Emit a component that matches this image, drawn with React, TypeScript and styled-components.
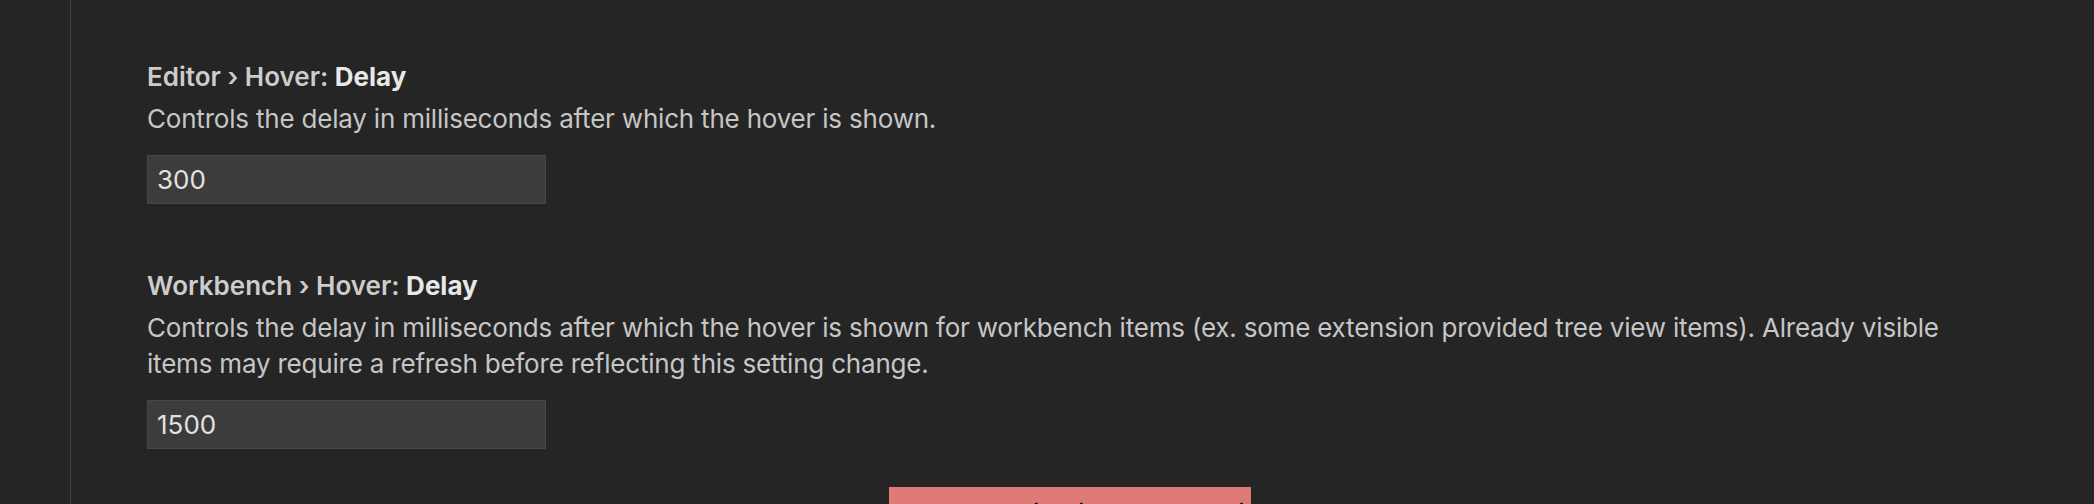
import React from 'react';
import styled, { createGlobalStyle } from 'styled-components';

const GlobalStyle = createGlobalStyle`
  html, body {
    margin: 0;
    padding: 0;
    background: #252525;
  }

  body {
    font-family: Inter, "Noto Sans", "Liberation Sans", sans-serif;
    -webkit-font-smoothing: antialiased;
  }
`;

const Page = styled.div`
  display: flex;
  height: 504px;
  overflow: hidden;
  background: #252525;
`;

const Toc = styled.div`
  width: 70px;
  flex: none;
  border-right: 1px solid #414141;
`;

const Content = styled.div`
  flex: 1;
  padding: 29px 0 0 76px;
  display: flex;
  flex-direction: column;
`;

const SettingItem = styled.div`
  display: flex;
  flex-direction: column;
  padding: 30px 0 34px;
`;

const Title = styled.div`
  font-size: 26px;
  line-height: 36px;
  font-weight: 600;
  color: #cccccc;
  white-space: nowrap;
`;

const Label = styled.span`
  color: #e8e8e8;
  font-weight: 700;
`;

const Description = styled.div`
  margin-top: 6px;
  max-width: 1810px;
  font-size: 26px;
  line-height: 36px;
  letter-spacing: -0.2px;
  color: #c6c6c6;
`;

const NumberInput = styled.input`
  box-sizing: border-box;
  margin-top: 18px;
  width: 399px;
  height: 49px;
  padding: 0 9px;
  background: #3c3c3c;
  border: 1px solid #474747;
  border-radius: 0;
  outline: none;
  font-family: inherit;
  font-size: 26px;
  color: #e2e2e2;
`;

const HoverBox = styled.div`
  margin: 4px 0 0 742px;
  width: 362px;
  height: 60px;
  padding: 9px 23px 0;
  box-sizing: border-box;
  background: #e07a77;
  color: #000000;
  font-size: 26px;
  line-height: 36px;
  white-space: nowrap;
`;

type Setting = {
  category: string;
  label: string;
  description: string;
  value: string;
};

const settings: Setting[] = [
  {
    category: 'Editor › Hover: ',
    label: 'Delay',
    description: 'Controls the delay in milliseconds after which the hover is shown.',
    value: '300',
  },
  {
    category: 'Workbench › Hover: ',
    label: 'Delay',
    description:
      'Controls the delay in milliseconds after which the hover is shown for workbench items (ex. some extension provided tree view items). Already visible items may require a refresh before reflecting this setting change.',
    value: '1500',
  },
];

const App: React.FC = () => {
  return (
    <>
      <GlobalStyle />
      <Page>
        <Toc />
        <Content>
          {settings.map(setting => (
            <SettingItem key={setting.category}>
              <Title>
                {setting.category}
                <Label>{setting.label}</Label>
              </Title>
              <Description>{setting.description}</Description>
              <NumberInput type="text" defaultValue={setting.value} />
            </SettingItem>
          ))}
          <HoverBox>Show setting in hover tooltip</HoverBox>
        </Content>
      </Page>
    </>
  );
};

export default App;
